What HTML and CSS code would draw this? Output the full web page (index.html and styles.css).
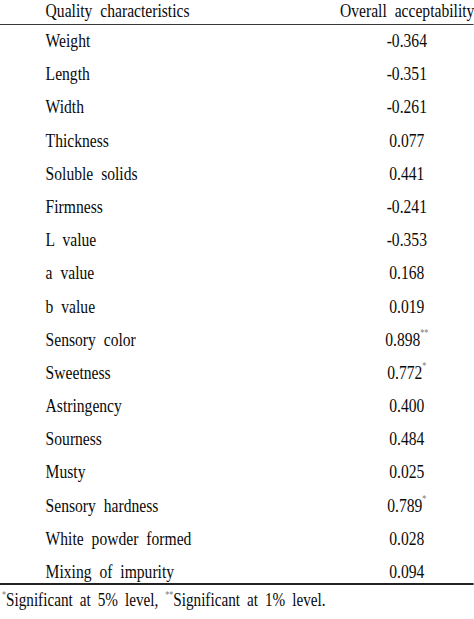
FILE: index.html
```html
<!DOCTYPE html>
<html>
<head>
<meta charset="utf-8">
<link rel="stylesheet" href="styles.css">
</head>
<body>
<div class="frame">
<div class="sheet">
  <div class="head row">
    <div class="name">Quality characteristics</div>
    <div class="val">Overall acceptability</div>
  </div>
  <div class="body">
    <div class="row"><div class="name">Weight</div><div class="val">-0.364</div></div>
    <div class="row"><div class="name">Length</div><div class="val">-0.351</div></div>
    <div class="row"><div class="name">Width</div><div class="val">-0.261</div></div>
    <div class="row"><div class="name">Thickness</div><div class="val">0.077</div></div>
    <div class="row"><div class="name">Soluble solids</div><div class="val">0.441</div></div>
    <div class="row"><div class="name">Firmness</div><div class="val">-0.241</div></div>
    <div class="row"><div class="name">L value</div><div class="val">-0.353</div></div>
    <div class="row"><div class="name">a value</div><div class="val">0.168</div></div>
    <div class="row"><div class="name">b value</div><div class="val">0.019</div></div>
    <div class="row"><div class="name">Sensory color</div><div class="val">0.898<sup class="sig">**</sup></div></div>
    <div class="row"><div class="name">Sweetness</div><div class="val">0.772<sup class="sig">*</sup></div></div>
    <div class="row"><div class="name">Astringency</div><div class="val">0.400</div></div>
    <div class="row"><div class="name">Sourness</div><div class="val">0.484</div></div>
    <div class="row"><div class="name">Musty</div><div class="val">0.025</div></div>
    <div class="row"><div class="name">Sensory hardness</div><div class="val">0.789<sup class="sig">*</sup></div></div>
    <div class="row"><div class="name">White powder formed</div><div class="val">0.028</div></div>
    <div class="row"><div class="name">Mixing of impurity</div><div class="val">0.094</div></div>
  </div>
  <div class="note"><sup class="sig">*</sup>Significant at 5% level, <sup class="sig">**</sup>Significant at 1% level.</div>
</div>
</div>
</body>
</html>
```
FILE: styles.css
```css
html, body {
  margin: 0;
  padding: 0;
  background: #fff;
}
.frame {
  width: 474px;
  height: 619px;
  overflow: hidden;
}
.sheet {
  width: 592px;
  transform: scaleX(0.8);
  transform-origin: 0 0;
  font-family: "Liberation Serif", "Times New Roman", serif;
  font-size: 19.5px;
  color: #0a0a0a;
  word-spacing: 5px;
}
.row {
  display: grid;
  grid-template-columns: 1fr 167px;
  line-height: 22px;
  height: 22px;
}
.name {
  padding-left: 57px;
  white-space: nowrap;
}
.val {
  text-align: center;
  white-space: nowrap;
}
.head {
  height: 22px;
  padding-bottom: 2px;
  border-bottom: 1px solid #3a3a3a;
}
.body {
  display: flex;
  flex-direction: column;
  gap: 11.2px;
  padding-top: 5px;
  border-bottom: 2px solid #222;
}
.sig {
  font-size: 10px;
  color: #777;
  vertical-align: 8px;
  line-height: 0;
  word-spacing: 0;
  letter-spacing: 0;
}
.val .sig {
  position: relative;
  top: -2px;
}
.note {
  padding-left: 2.5px;
  margin-top: 3.5px;
  line-height: 22px;
  font-size: 19px;
  word-spacing: 4px;
  white-space: nowrap;
}
```
